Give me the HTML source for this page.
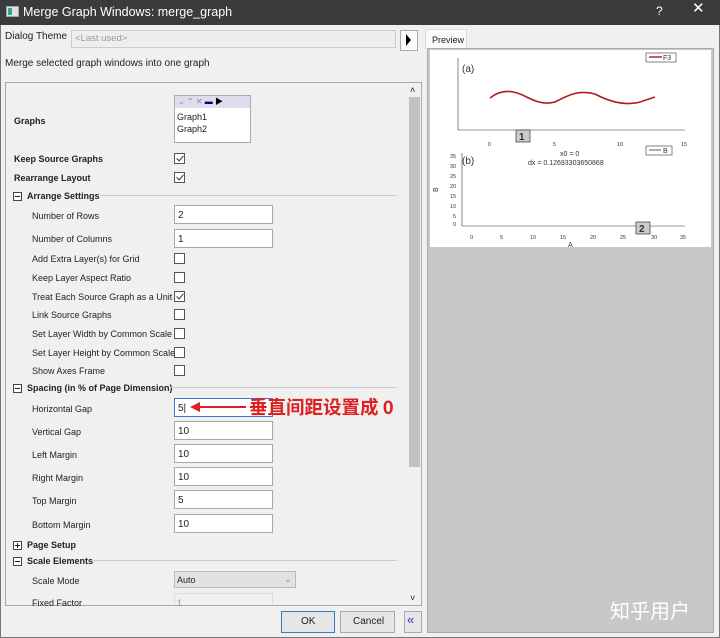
<!DOCTYPE html>
<html><head><meta charset="utf-8"><style>
*{margin:0;padding:0;box-sizing:border-box}
body{width:720px;height:638px;overflow:hidden;background:#f0f0f0;font-family:"Liberation Sans","Noto Sans CJK SC",sans-serif;font-size:9px;color:#222;position:relative}
.a{position:absolute}
.t{position:absolute;white-space:nowrap;line-height:12px}
.b{font-weight:bold}
.in{position:absolute;width:99px;height:19px;background:#fff;border:1px solid #a8a8a8;font-size:10px;padding:4px 0 0 3px;line-height:12px}
.cb{position:absolute;left:174px;width:11px;height:11px;border:1px solid #555;background:#fff}
.ck::after{content:"";position:absolute;left:3px;top:0px;width:3px;height:6px;border-right:1px solid #333;border-bottom:1px solid #333;transform:rotate(40deg)}
.sec{position:absolute;left:13px;width:9px;height:9px;border:1px solid #444;background:#fff}
.sec::before{content:"";position:absolute;left:1px;top:3px;width:5px;height:1px;background:#222}
.plus::after{content:"";position:absolute;left:3px;top:1px;width:1px;height:5px;background:#222}
.ln{position:absolute;height:1px;background:#ccc}
</style></head><body>
<div class="a" style="left:0;top:0;width:720px;height:25px;background:#3b3b3b"></div>
<div class="a" style="left:6px;top:6px;width:13px;height:11px;background:#dde;border:1px solid #9aa"></div>
<div class="a" style="left:8px;top:8px;width:4px;height:7px;background:#3a7"></div>
<div class="t" style="left:23px;top:5px;color:#fff;font-size:12.5px;line-height:15px">Merge Graph Windows: merge_graph</div>
<div class="t" style="left:656px;top:5px;color:#fff;font-size:12px">?</div>
<div class="t" style="left:692px;top:3px;color:#fff;font-size:15px">✕</div>
<div class="a" style="left:0;top:25px;width:720px;height:613px;border:1px solid #777;border-top:none"></div>
<div class="t" style="left:5px;top:31px;font-size:10px">Dialog Theme</div>
<div class="a" style="left:71px;top:30px;width:325px;height:18px;border:1px solid #ccc;background:#eee"></div>
<div class="t" style="left:75px;top:33px;color:#999;font-size:9.5px">&lt;Last used&gt;</div>
<div class="a" style="left:400px;top:30px;width:18px;height:21px;border:1px solid #aaa;background:#fafafa"></div>
<div class="a" style="left:406px;top:34px;width:0;height:0;border-left:5px solid #000;border-top:6px solid transparent;border-bottom:6px solid transparent"></div>
<div class="t" style="left:5px;top:58px;font-size:10px">Merge selected graph windows into one graph</div>
<div class="a" style="left:5px;top:82px;width:417px;height:524px;border:1px solid #aaa;background:#f0f0f0"></div>
<div class="a" style="left:408px;top:83px;width:13px;height:522px;background:#f0f0f0"></div>
<div class="a" style="left:409px;top:97px;width:11px;height:370px;background:#c2c2c2"></div>
<div class="t" style="left:410px;top:84px;font-size:9px">˄</div>
<div class="t" style="left:410px;top:592px;font-size:9px">˅</div>

<div class="a" style="left:174px;top:95px;width:77px;height:48px;border:1px solid #aaa;background:#fff"></div>
<div class="a" style="left:175px;top:96px;width:75px;height:12px;background:#dde"></div>
<div class="t" style="left:178px;top:96px;font-size:8px;color:#889">⌄ ⌃ ✕ <span style="color:#00007a">▬</span> <span style="color:#000">▶</span></div>
<div class="t" style="left:177px;top:111px;font-size:9px">Graph1</div>
<div class="t" style="left:177px;top:123px;font-size:9px">Graph2</div>

<div class="t b" style="left:14px;top:115px">Graphs</div>
<div class="t b" style="left:14px;top:153px">Keep Source Graphs</div>
<div class="cb ck" style="top:153px"></div>
<div class="t b" style="left:14px;top:172px">Rearrange Layout</div>
<div class="cb ck" style="top:172px"></div>

<div class="sec" style="top:192px"></div><div class="t b" style="left:27px;top:190px">Arrange Settings</div><div class="ln" style="left:100px;top:195px;width:297px"></div>
<div class="t" style="left:32px;top:210px">Number of Rows</div><div class="in" style="left:174px;top:205px">2</div>
<div class="t" style="left:32px;top:233px">Number of Columns</div><div class="in" style="left:174px;top:229px">1</div>
<div class="t" style="left:32px;top:253px">Add Extra Layer(s) for Grid</div><div class="cb" style="top:253px"></div>
<div class="t" style="left:32px;top:272px">Keep Layer Aspect Ratio</div><div class="cb" style="top:272px"></div>
<div class="t" style="left:32px;top:291px">Treat Each Source Graph as a Unit</div><div class="cb ck" style="top:291px"></div>
<div class="t" style="left:32px;top:309px">Link Source Graphs</div><div class="cb" style="top:309px"></div>
<div class="t" style="left:32px;top:328px">Set Layer Width by Common Scale</div><div class="cb" style="top:328px"></div>
<div class="t" style="left:32px;top:347px">Set Layer Height by Common Scale</div><div class="cb" style="top:347px"></div>
<div class="t" style="left:32px;top:365px">Show Axes Frame</div><div class="cb" style="top:365px"></div>

<div class="sec" style="top:384px"></div><div class="t b" style="left:27px;top:382px">Spacing (in % of Page Dimension)</div><div class="ln" style="left:170px;top:387px;width:227px"></div>
<div class="t" style="left:32px;top:403px">Horizontal Gap</div><div class="in" style="left:174px;top:398px;border-color:#3a78c8">5|</div>
<div class="t" style="left:32px;top:426px">Vertical Gap</div><div class="in" style="left:174px;top:421px">10</div>
<div class="t" style="left:32px;top:449px">Left Margin</div><div class="in" style="left:174px;top:444px">10</div>
<div class="t" style="left:32px;top:472px">Right Margin</div><div class="in" style="left:174px;top:467px">10</div>
<div class="t" style="left:32px;top:495px">Top Margin</div><div class="in" style="left:174px;top:490px">5</div>
<div class="t" style="left:32px;top:519px">Bottom Margin</div><div class="in" style="left:174px;top:514px">10</div>
<div class="sec plus" style="top:541px"></div><div class="t b" style="left:27px;top:539px">Page Setup</div>
<div class="sec" style="top:557px"></div><div class="t b" style="left:27px;top:555px">Scale Elements</div><div class="ln" style="left:90px;top:560px;width:307px"></div>
<div class="t" style="left:32px;top:575px">Scale Mode</div>
<div class="a" style="left:174px;top:571px;width:122px;height:17px;background:#e2e2e2;border:1px solid #bbb"></div>
<div class="t" style="left:177px;top:574px">Auto</div><div class="t" style="left:284px;top:573px;color:#888">⌄</div>
<div class="t" style="left:32px;top:597px">Fixed Factor</div>
<div class="a" style="left:174px;top:593px;width:99px;height:12px;border:1px solid #ddd;border-bottom:none;background:#f0f0f0"></div>
<div class="t" style="left:177px;top:597px;color:#999">1</div>

<div class="a" style="left:281px;top:611px;width:54px;height:22px;border:1px solid #3a78c8;background:#e6e6e6"></div>
<div class="t" style="left:301px;top:616px;font-size:10px">OK</div>
<div class="a" style="left:340px;top:611px;width:55px;height:22px;border:1px solid #aaa;background:#e6e6e6"></div>
<div class="t" style="left:353px;top:616px;font-size:10px">Cancel</div>
<div class="a" style="left:404px;top:611px;width:18px;height:22px;border:1px solid #aaa;background:#e6e6e6"></div>
<div class="t" style="left:407px;top:614px;font-size:13px;color:#33c">«</div>

<div class="a" style="left:425px;top:29px;width:42px;height:20px;background:#fafafa;border:1px solid #ddd;border-bottom:none"></div>
<div class="t" style="left:432px;top:34px">Preview</div>
<div class="a" style="left:427px;top:48px;width:287px;height:585px;border:1px solid #aaa;background:#c8c8c8"></div>
<div class="a" style="left:430px;top:50px;width:281px;height:197px;background:#fff"></div>
<svg class="a" style="left:430px;top:50px" width="281" height="197" font-family="Liberation Sans" font-size="5.5" fill="#333">
<text x="2" y="22" font-size="10" transform="rotate(-90 4 47)">F3</text>
<line x1="28" y1="8" x2="28" y2="80" stroke="#333" stroke-width=".6"/>
<line x1="28" y1="80" x2="255" y2="80" stroke="#333" stroke-width=".6"/>
<text x="32" y="22" font-size="10">(a)</text>
<rect x="216" y="3" width="30" height="9" fill="#fff" stroke="#333" stroke-width=".6"/>
<line x1="219" y1="7" x2="232" y2="7" stroke="#b22" stroke-width="1.5"/><text x="233" y="10" font-size="7">F3</text>
<path d="M60,48 C70,40 80,40 90,44 C100,48 110,56 125,52 C140,44 150,40 165,44 C180,52 195,56 210,52 L225,47" fill="none" stroke="#b01c1c" stroke-width="1.6"/>
<text x="58" y="96">0</text><text x="123" y="96">5</text><text x="187" y="96">10</text><text x="251" y="96">15</text>
<rect x="86" y="80" width="14" height="12" fill="#ccc" stroke="#333" stroke-width=".7"/><text x="89" y="90" font-size="10" font-weight="bold">1</text>
<text x="130" y="106" font-size="7">x0 = 0</text><text x="98" y="115" font-size="7">dx = 0.12693303650868</text>
<rect x="216" y="96" width="26" height="9" fill="#fff" stroke="#333" stroke-width=".6"/>
<line x1="219" y1="100" x2="231" y2="100" stroke="#333" stroke-width=".8"/><text x="233" y="103" font-size="7">B</text>
<line x1="32" y1="103" x2="32" y2="176" stroke="#333" stroke-width=".6"/>
<line x1="32" y1="176" x2="255" y2="176" stroke="#333" stroke-width=".6"/>
<text x="32" y="114" font-size="10">(b)</text>
<text x="20" y="108">35</text><text x="20" y="118">30</text><text x="20" y="128">25</text><text x="20" y="138">20</text><text x="20" y="148">15</text><text x="20" y="158">10</text><text x="23" y="168">5</text><text x="23" y="176">0</text>
<text x="2" y="140" font-size="7" transform="rotate(-90 6 138)">B</text>
<text x="40" y="189">0</text><text x="100" y="189">10</text><text x="160" y="189">20</text><text x="221" y="189">30</text><text x="250" y="189">35</text><text x="70" y="189">5</text><text x="130" y="189">15</text><text x="190" y="189">25</text>
<rect x="206" y="172" width="14" height="12" fill="#ccc" stroke="#333" stroke-width=".7"/><text x="209" y="182" font-size="10" font-weight="bold">2</text>
<text x="138" y="197" font-size="7">A</text>
</svg>

<div class="a" style="left:198px;top:406px;width:48px;height:2px;background:#e02020"></div>
<div class="a" style="left:190px;top:402px;width:0;height:0;border-right:10px solid #e02020;border-top:5px solid transparent;border-bottom:5px solid transparent"></div>
<div class="t" style="left:249px;top:396px;color:#e02020;font-size:18.5px;line-height:22px;font-weight:bold;font-family:'Noto Sans CJK SC','Liberation Sans',sans-serif">垂直间距设置成 0</div>
<div class="t" style="left:610px;top:598px;color:#fff;font-size:20px;line-height:24px;font-family:'Noto Sans CJK SC',sans-serif">知乎用户</div>
</body></html>
